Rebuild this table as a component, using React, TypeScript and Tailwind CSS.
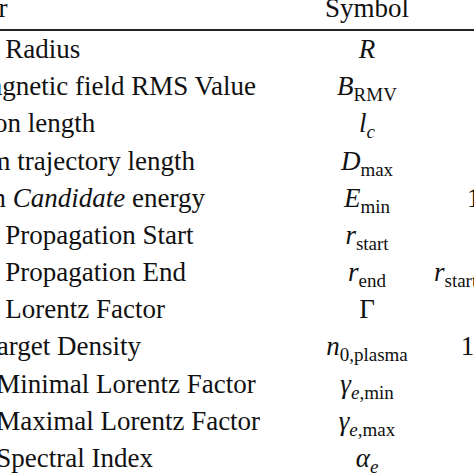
import React from 'react';

const Sub = ({ children }: { children: React.ReactNode }) => (
  <span className="align-sub text-[19px] leading-none not-italic">{children}</span>
);

const Sup = ({ children }: { children: React.ReactNode }) => (
  <span className="align-super text-[19px] leading-none">{children}</span>
);

type Row = { name: React.ReactNode; symbol: React.ReactNode; value: React.ReactNode };

const rows: Row[] = [
  { name: 'Plasmoid Radius', symbol: <i>R</i>, value: '0.1 pc' },
  { name: 'Mean Magnetic field RMS Value', symbol: <><i>B</i><Sub>RMV</Sub></>, value: '1 G' },
  { name: 'Correlation length', symbol: <><i>l</i><Sub><i>c</i></Sub></>, value: <><i>R</i>/10</> },
  { name: 'Maximum trajectory length', symbol: <><i>D</i><Sub>max</Sub></>, value: <>2 <i>R</i></> },
  {
    name: <>Minimum <i>Candidate</i> energy</>,
    symbol: <><i>E</i><Sub>min</Sub></>,
    value: <>10<Sup>15</Sup> eV</>,
  },
  { name: 'Plasmoid Propagation Start', symbol: <><i>r</i><Sub>start</Sub></>, value: '1 pc' },
  {
    name: 'Plasmoid Propagation End',
    symbol: <><i>r</i><Sub>end</Sub></>,
    value: <><i>r</i><Sub>start</Sub> + 10<Sup>17</Sup> cm</>,
  },
  { name: 'Plasmoid Lorentz Factor', symbol: 'Γ', value: '10' },
  {
    name: 'Plasma Target Density',
    symbol: <><i>n</i><Sub>0,plasma</Sub></>,
    value: <>10<Sup>3</Sup> cm<Sup>−3</Sup></>,
  },
  { name: 'Electron Minimal Lorentz Factor', symbol: <><i>γ</i><Sub><i>e</i>,min</Sub></>, value: <>10<Sup>2</Sup></> },
  { name: 'Electron Maximal Lorentz Factor', symbol: <><i>γ</i><Sub><i>e</i>,max</Sub></>, value: <>10<Sup>6</Sup></> },
  { name: 'Electron Spectral Index', symbol: <><i>α</i><Sub><i>e</i></Sub></>, value: '2.2' },
];

export default function App() {
  return (
    <div
      className="w-[474px] h-[474px] overflow-hidden bg-white text-[#111]"
      style={{ fontFamily: '"Liberation Serif", "Times New Roman", serif' }}
    >
      {/* the table is wider than the crop: first column starts left of the frame */}
      <div className="ml-[-102px] mt-[-10px] w-[686px] text-[27px] leading-[37.2px]">
        <div className="grid grid-cols-[402px_134px_150px] h-[37.2px]">
          <div className="whitespace-nowrap">Parameter</div>
          <div className="text-center whitespace-nowrap">Symbol</div>
          <div className="text-center whitespace-nowrap">Value</div>
        </div>
        <div className="mt-[2.3px] h-[1.5px] bg-[#222]" />

        {rows.map((r, i) => (
          <div key={i} className="grid grid-cols-[402px_134px_150px] h-[37.2px]">
            <div className="whitespace-nowrap">{r.name}</div>
            <div className="text-center whitespace-nowrap">{r.symbol}</div>
            <div className="text-center whitespace-nowrap">{r.value}</div>
          </div>
        ))}
      </div>
    </div>
  );
}
